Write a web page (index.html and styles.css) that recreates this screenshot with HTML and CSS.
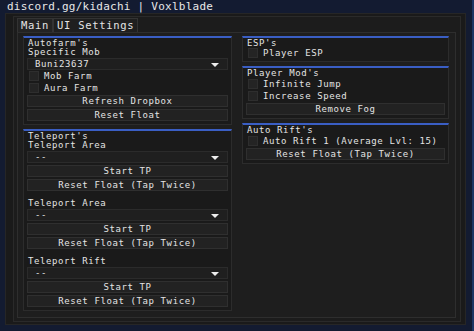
FILE: index.html
```html
<!DOCTYPE html>
<html lang="en">
<head>
  <meta charset="UTF-8">
  <title>discord.gg/kidachi | Voxlblade</title>
  <link rel="stylesheet" href="styles.css">
</head>
<body>
  <div class="title">discord.gg/kidachi | Voxlblade</div>
  <div class="window">
    <div class="frame">
      <div class="tabs">
        <div class="tab active">Main</div>
        <div class="tab">UI Settings</div>
      </div>
      <div class="panel">
        <div class="column">
          <div class="group">
            <div class="label">Autofarm's</div>
            <div class="label">Specific Mob</div>
            <div class="dropdown">Buni23637<span class="arrow"></span></div>
            <div class="check"><span class="box"></span>Mob Farm</div>
            <div class="check"><span class="box"></span>Aura Farm</div>
            <div class="btn first">Refresh Dropbox</div>
            <div class="btn">Reset Float</div>
          </div>
          <div class="group">
            <div class="label">Teleport's</div>
            <div class="label">Teleport Area</div>
            <div class="dropdown">--<span class="arrow"></span></div>
            <div class="btn">Start TP</div>
            <div class="btn">Reset Float (Tap Twice)</div>
            <div class="label section">Teleport Area</div>
            <div class="dropdown">--<span class="arrow"></span></div>
            <div class="btn">Start TP</div>
            <div class="btn">Reset Float (Tap Twice)</div>
            <div class="label section">Teleport Rift</div>
            <div class="dropdown">--<span class="arrow"></span></div>
            <div class="btn">Start TP</div>
            <div class="btn">Reset Float (Tap Twice)</div>
          </div>
        </div>
        <div class="column">
          <div class="group">
            <div class="label">ESP's</div>
            <div class="check short"><span class="box"></span>Player ESP</div>
          </div>
          <div class="group">
            <div class="label">Player Mod's</div>
            <div class="check"><span class="box"></span>Infinite Jump</div>
            <div class="check"><span class="box"></span>Increase Speed</div>
            <div class="btn first">Remove Fog</div>
          </div>
          <div class="group">
            <div class="label">Auto Rift's</div>
            <div class="check"><span class="box"></span>Auto Rift 1 (Average Lvl: 15)</div>
            <div class="btn first">Reset Float (Tap Twice)</div>
          </div>
        </div>
      </div>
    </div>
  </div>
</body>
</html>
```

FILE: styles.css
```css
body {
  margin: 0;
  height: 331px;
  background: #131b31;
  font-family: "DejaVu Sans Mono", "Liberation Mono", monospace;
  font-size: 9px;
  letter-spacing: 0.6px;
  color: #e4e4e4;
  overflow: hidden;
  box-sizing: border-box;
  border-right: 2px solid #1d3563;
}
.title {
  height: 13px;
  line-height: 13px;
  padding-left: 7px;
  font-size: 11px;
  letter-spacing: 0.25px;
  color: #e8e8e8;
}
.window {
  margin: 0 6px 0 5px;
  height: 312px;
  background: #1a1a1a;
  border: 1px solid #262626;
  box-sizing: border-box;
  padding: 2px 4px 2px 7px;
}
.frame {
  height: 100%;
  border: 1px solid #2a2a2a;
  background: #1c1c1c;
  box-sizing: border-box;
  padding: 1px 4px 3px 3px;
  display: flex;
  flex-direction: column;
}
.tabs {
  display: flex;
  height: 14px;
}
.tab {
  border: 1px solid #333;
  border-bottom: none;
  background: #1f1f1f;
  padding: 0 3px;
  line-height: 13px;
  font-size: 10.5px;
  letter-spacing: 0.7px;
}
.tab.active {
  background: #232323;
}
.panel {
  flex: 1;
  border: 1px solid #2e2e2e;
  background: #1e1e1e;
  padding: 3px 5px;
  display: flex;
  gap: 10px;
}
.column {
  display: flex;
  flex-direction: column;
  gap: 4px;
}
.column:first-child {
  width: 209px;
}
.column:last-child {
  width: 207px;
}
.group {
  background: #1a1a1a;
  border: 1px solid #2c2c2c;
  border-top: 2px solid #3a5ec4;
  padding: 1px 3px 3px;
  display: flex;
  flex-direction: column;
}
.label {
  height: 9px;
  line-height: 9px;
  padding-left: 1px;
}
.label.section {
  margin-top: 8px;
}
.dropdown {
  position: relative;
  margin-top: 1px;
  height: 12px;
  line-height: 11px;
  background: #1f1f1f;
  border: 1px solid #2b2b2b;
  box-sizing: border-box;
  padding-left: 7px;
}
.arrow {
  position: absolute;
  right: 8px;
  top: 4px;
  border-left: 4px solid transparent;
  border-right: 4px solid transparent;
  border-top: 4px solid #eee;
}
.check {
  height: 12px;
  display: flex;
  align-items: center;
  gap: 5px;
  padding-left: 2px;
}
.check.short {
  height: 10px;
}
.box {
  width: 8px;
  height: 8px;
  background: #242424;
  border: 1px solid #2e2e2e;
}
.btn {
  margin-top: 2px;
  height: 12px;
  line-height: 11px;
  background: #222;
  border: 1px solid #2f2f2f;
  box-sizing: border-box;
  text-align: center;
}
.btn.first {
  margin-top: 1px;
}
```
